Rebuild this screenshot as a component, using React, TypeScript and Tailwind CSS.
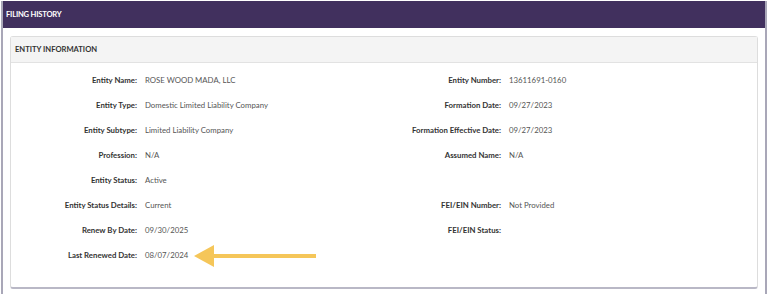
import React from "react";

const left: [string, string][] = [
  ["Entity Name:", "ROSE WOOD MADA, LLC"],
  ["Entity Type:", "Domestic Limited Liability Company"],
  ["Entity Subtype:", "Limited Liability Company"],
  ["Profession:", "N/A"],
  ["Entity Status:", "Active"],
  ["Entity Status Details:", "Current"],
  ["Renew By Date:", "09/30/2025"],
  ["Last Renewed Date:", "08/07/2024"],
];

const right: [string, string][] = [
  ["Entity Number:", "13611691-0160"],
  ["Formation Date:", "09/27/2023"],
  ["Formation Effective Date:", "09/27/2023"],
  ["Assumed Name:", "N/A"],
  ["", ""],
  ["FEI/EIN Number:", "Not Provided"],
  ["FEI/EIN Status:", ""],
  ["", ""],
];

function Row({ label, value, labelW, arrow }: { label: string; value: string; labelW: string; arrow?: boolean }) {
  return (
    <div className="flex h-[25px] items-center">
      <div className={`${labelW} shrink-0 text-right font-bold text-[#333333]`}>{label}</div>
      <div className="pl-[8px] text-[#555555] flex items-center">
        {value}
        {arrow && (
          <svg width="124" height="24" viewBox="0 0 124 24" className="ml-[6px]">
            <path d="M20 10 H122 V14 H20 Z" fill="#f5c659" />
            <path d="M0 12 L20 1 L20 23 Z" fill="#f5c659" />
          </svg>
        )}
      </div>
    </div>
  );
}

export default function App() {
  return (
    <div className="w-[768px] h-[294px] bg-white" style={{ fontFamily: "Lato, 'Open Sans', sans-serif" }}>
      <div className="ml-[1px] w-[766px] h-[294px] border-x-2 border-[#a9a7b8] border-r-[#a9a7b8]">
        <div className="h-[27px] mt-[1px] bg-[#41305e] text-white text-[7.6px] font-bold flex items-center pl-[3px] tracking-[-0.2px]">
          FILING HISTORY
        </div>
        <div className="mx-[7px] mt-[8px] h-[253px] border border-[#dddddd] border-b-2 border-b-[#b9b8c6] rounded-[3px] text-[7.8px]">
          <div className="h-[26px] bg-[#f4f4f4] border-b border-[#e2e2e2] flex items-center pl-[4px] text-[7.6px] font-bold text-[#333333]">
            ENTITY INFORMATION
          </div>
          <div className="flex pt-[5px]">
            <div className="w-[364px]">
              {left.map(([l, v], i) => (
                <Row key={i} label={l} value={v} labelW="w-[126px]" arrow={i === 7} />
              ))}
            </div>
            <div>
              {right.map(([l, v], i) => (
                <Row key={i} label={l} value={v} labelW="w-[126px]" />
              ))}
            </div>
          </div>
        </div>
      </div>
    </div>
  );
}
